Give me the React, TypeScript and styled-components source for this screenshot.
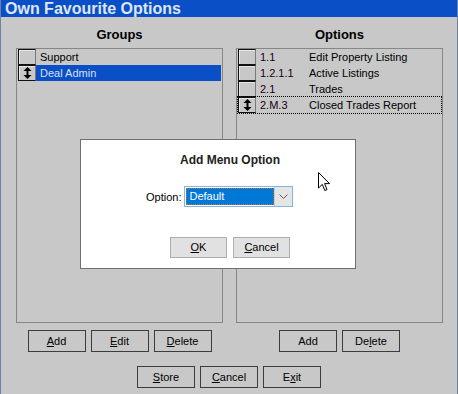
import React from "react";
import styled, { createGlobalStyle } from "styled-components";

const GlobalStyle = createGlobalStyle`
  html, body { margin: 0; padding: 0; background: #c8c8c8; }
  body { font-family: "Liberation Sans", Arial, sans-serif; }
  * { box-sizing: border-box; }
`;

const Window = styled.div`
  position: relative;
  width: 458px;
  height: 394px;
  background: #c8c8c8;
  border-left: 1px solid #6d83a8;
  border-right: 1px solid #6d83a8;
  display: flex;
  flex-direction: column;
  overflow: hidden;
`;

const TitleBar = styled.div`
  height: 17px;
  margin: 0 -1px;
  background: #0a4fc6;
  color: #dfe6f2;
  font: bold 16px/17px "Liberation Sans", Arial, sans-serif;
  padding-left: 5px;
  white-space: nowrap;
`;

const Body = styled.div`
  padding: 0 15px;
  display: flex;
  flex-direction: column;
`;

const Columns = styled.div`
  display: grid;
  grid-template-columns: 207px 207px;
  column-gap: 13px;
`;

const Column = styled.div`
  display: flex;
  flex-direction: column;
`;

const Header = styled.div`
  height: 31px;
  padding-top: 10px;
  text-align: center;
  font: bold 13px/15px "Liberation Sans", Arial, sans-serif;
  color: #000;
`;

const ListBox = styled.div`
  height: 275px;
  border: 1px solid #868686;
  padding: 0 1px;
  display: flex;
  flex-direction: column;
`;

const Row = styled.div<{ $focused?: boolean }>`
  display: flex;
  height: 16px;
  font: 11px/16px "Liberation Sans", Arial, sans-serif;
  color: #000;
  outline: ${(p) => (p.$focused ? "1px dotted #000" : "none")};
`;

const CheckCell = styled.div`
  width: 18px;
  height: 16px;
  flex: none;
  background: #c8c8c8;
  border: 1px solid #111;
  border-right-color: #7a7a7a;
  box-shadow: inset 1px 1px 0 #e6e6e6;
  display: flex;
  align-items: center;
  justify-content: center;
`;

const Label = styled.div<{ $selected?: boolean }>`
  flex: 1;
  padding-left: 4px;
  background: ${(p) => (p.$selected ? "#0a4fc6" : "transparent")};
  color: ${(p) => (p.$selected ? "#d6e0f2" : "#000")};
  white-space: nowrap;
`;

const NumCol = styled.div`
  width: 53px;
  padding-left: 4px;
  flex: none;
  color: #1a0010;
`;

const NameCol = styled.div`
  flex: 1;
  white-space: nowrap;
`;

const ButtonRow = styled.div<{ $top: number }>`
  display: flex;
  justify-content: center;
  gap: 5px;
  margin-top: ${(p) => p.$top}px;
`;

const WinButton = styled.button`
  width: 58px;
  height: 22px;
  padding: 0;
  border: 1px solid #3c3c3c;
  background: #c8c8c8;
  color: #000;
  font: 11px/20px "Liberation Sans", Arial, sans-serif;
  text-align: center;
  u { text-decoration: underline; }
`;

const Dialog = styled.div`
  position: absolute;
  left: 79px;
  top: 139px;
  width: 276px;
  height: 130px;
  background: #ffffff;
  border: 1px solid #6f6f6f;
  padding: 13px 0 0 65px;
`;

const DialogContent = styled.div`
  width: 168px;
  display: flex;
  flex-direction: column;
  align-items: center;
`;

const DialogTitle = styled.div`
  font: bold 12px/15px "Liberation Sans", Arial, sans-serif;
  color: #222;
  white-space: nowrap;
`;

const OptionRow = styled.div`
  align-self: flex-start;
  margin-top: 18px;
  display: flex;
  align-items: center;
  gap: 3px;
  font: 11px "Liberation Sans", Arial, sans-serif;
  color: #000;
`;

const Select = styled.div`
  width: 109px;
  height: 21px;
  border: 1px solid #7eb4ea;
  padding: 1px 0 1px 1px;
  display: flex;
  background: #fff;
`;

const SelectValue = styled.div`
  flex: 1;
  background: #0078d7;
  color: #fff;
  outline: 1px dotted #c07020;
  outline-offset: -1px;
  font: 11px/17px "Liberation Sans", Arial, sans-serif;
  padding-left: 3px;
`;

const SelectArrow = styled.div`
  width: 18px;
  margin-top: -1px;
  margin-bottom: -1px;
  background: #e5e5e5;
  border-left: 1px solid #c8c8c8;
  display: flex;
  align-items: center;
  justify-content: center;
`;

const DialogButtons = styled.div`
  margin-top: 30px;
  display: flex;
  gap: 6px;
`;

const DialogButton = styled.button`
  width: 57px;
  height: 21px;
  padding: 0;
  background: #e1e1e1;
  border: 1px solid #adadad;
  color: #000;
  font: 11px/19px "Liberation Sans", Arial, sans-serif;
`;

const Cursor = styled.svg`
  position: absolute;
  left: 317px;
  top: 172px;
`;

const MoveIcon = () => (
  <svg width="9" height="12" viewBox="0 0 9 12">
    <polygon points="0.5,4 4.5,0 8.5,4" fill="#000" />
    <polygon points="0.5,8 4.5,12 8.5,8" fill="#000" />
    <rect x="3.5" y="3" width="2" height="6" fill="#000" />
  </svg>
);

const groups = [
  { name: "Support", selected: false, moving: false },
  { name: "Deal Admin", selected: true, moving: true },
];

const options = [
  { num: "1.1", name: "Edit Property Listing", moving: false },
  { num: "1.2.1.1", name: "Active Listings", moving: false },
  { num: "2.1", name: "Trades", moving: false },
  { num: "2.M.3", name: "Closed Trades Report", moving: true },
];

export default function App() {
  return (
    <>
      <GlobalStyle />
      <Window>
        <TitleBar>Own Favourite Options</TitleBar>
        <Body>
          <Columns>
            <Column>
              <Header>Groups</Header>
              <ListBox>
                {groups.map((g) => (
                  <Row key={g.name}>
                    <CheckCell>{g.moving && <MoveIcon />}</CheckCell>
                    <Label $selected={g.selected}>{g.name}</Label>
                  </Row>
                ))}
              </ListBox>
              <ButtonRow $top={7}>
                <WinButton><u>A</u>dd</WinButton>
                <WinButton><u>E</u>dit</WinButton>
                <WinButton><u>D</u>elete</WinButton>
              </ButtonRow>
            </Column>
            <Column>
              <Header>Options</Header>
              <ListBox>
                {options.map((o) => (
                  <Row key={o.num} $focused={o.moving}>
                    <CheckCell>{o.moving && <MoveIcon />}</CheckCell>
                    <NumCol>{o.num}</NumCol>
                    <NameCol>{o.name}</NameCol>
                  </Row>
                ))}
              </ListBox>
              <ButtonRow $top={7}>
                <WinButton>Add</WinButton>
                <WinButton>De<u>l</u>ete</WinButton>
              </ButtonRow>
            </Column>
          </Columns>
          <ButtonRow $top={14}>
            <WinButton><u>S</u>tore</WinButton>
            <WinButton><u>C</u>ancel</WinButton>
            <WinButton>E<u>x</u>it</WinButton>
          </ButtonRow>
        </Body>
        <Dialog>
          <DialogContent>
            <DialogTitle>Add Menu Option</DialogTitle>
            <OptionRow>
              <span>Option:</span>
              <Select>
                <SelectValue>Default</SelectValue>
                <SelectArrow>
                  <svg width="9" height="5" viewBox="0 0 9 5">
                    <polyline points="0.5,0.5 4.5,4.5 8.5,0.5" fill="none" stroke="#606060" strokeWidth="1" />
                  </svg>
                </SelectArrow>
              </Select>
            </OptionRow>
            <DialogButtons>
              <DialogButton><u>O</u>K</DialogButton>
              <DialogButton><u>C</u>ancel</DialogButton>
            </DialogButtons>
          </DialogContent>
        </Dialog>
        <Cursor width="13" height="20" viewBox="0 0 13 20">
          <path d="M0.5,0.5 L0.5,16 L4.3,12.4 L6.8,18.5 L9,17.6 L6.6,11.6 L11.5,11.6 Z" fill="#fff" stroke="#000" strokeWidth="1" strokeLinejoin="miter" />
        </Cursor>
      </Window>
    </>
  );
}
